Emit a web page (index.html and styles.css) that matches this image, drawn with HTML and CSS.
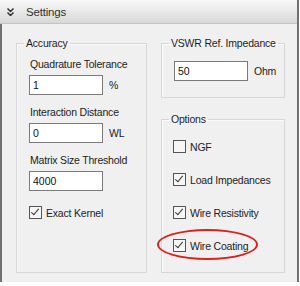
FILE: index.html
```html
<!DOCTYPE html>
<html lang="en">
<head>
    <meta charset="UTF-8">
    <title>Settings</title>
    <link rel="stylesheet" href="styles.css">
</head>
<body>
    <div class="panel">
        <div class="panel-head">
            <svg class="chevron" width="7" height="8" viewBox="0 0 7 8">
                <path d="M0.5 0.5 L3.5 3.5 L6.5 0.5 M0.5 4.5 L3.5 7.5 L6.5 4.5" fill="none" stroke="#333" stroke-width="1.5"/>
            </svg>
            <span>Settings</span>
        </div>
        <div class="panel-body">
            <fieldset class="group accuracy">
                <legend>Accuracy</legend>
                <div class="group-inner">
                    <div class="field">
                        <label>Quadrature Tolerance</label>
                        <div class="input-row"><input type="text" value="1"><span class="unit">%</span></div>
                    </div>
                    <div class="field">
                        <label>Interaction Distance</label>
                        <div class="input-row"><input type="text" value="0"><span class="unit">WL</span></div>
                    </div>
                    <div class="field">
                        <label>Matrix Size Threshold</label>
                        <div class="input-row"><input type="text" value="4000"></div>
                    </div>
                    <div class="check checked"><span class="box"></span>Exact Kernel</div>
                </div>
            </fieldset>
            <div class="right-col">
                <fieldset class="group vswr">
                    <legend>VSWR Ref. Impedance</legend>
                    <div class="group-inner">
                        <div class="input-row"><input type="text" value="50"><span class="unit">Ohm</span></div>
                    </div>
                </fieldset>
                <fieldset class="group options">
                    <legend>Options</legend>
                    <div class="group-inner">
                        <div class="check"><span class="box"></span>NGF</div>
                        <div class="check checked"><span class="box"></span>Load Impedances</div>
                        <div class="check checked"><span class="box"></span>Wire Resistivity</div>
                        <div class="check checked marked"><span class="box"></span>Wire Coating</div>
                    </div>
                </fieldset>
            </div>
        </div>
    </div>
</body>
</html>
```
FILE: styles.css
```css
body {
    margin: 0;
    background: #fff;
    font-family: "Liberation Sans", Arial, sans-serif;
    font-size: 10.5px;
    letter-spacing: -0.2px;
    color: #222;
}

.panel {
    width: 297px;
    height: 282px;
    border-right: 2px solid #707070;
    background: #f0f0f0;
    display: flex;
    flex-direction: column;
}

.panel-head {
    height: 23px;
    flex-shrink: 0;
    border-bottom: 1px solid #c4c4c4;
    background: linear-gradient(#f8f8f8, #d8d8d8);
    display: flex;
    align-items: center;
    gap: 12px;
    padding-left: 7px;
    font-size: 11.5px;
    color: #333;
}

.chevron {
    margin-top: 1px;
}

.panel-body {
    flex: 1;
    border-left: 2px solid #707070;
    display: flex;
    gap: 14px;
    padding: 13px 0 15px 14px;
}

.group {
    margin: 0;
    padding: 0;
    border: 1px solid #d7d7d7;
    box-shadow: inset 1px 1px 0 #fafafa;
    box-sizing: border-box;
    min-width: 0;
}

.group legend {
    margin-left: 7px;
    padding: 0 2px;
    white-space: nowrap;
    color: #1e1e1e;
}

.accuracy {
    width: 131px;
}

.accuracy .group-inner {
    padding: 9px 0 0 12px;
}

.right-col {
    width: 124px;
    display: flex;
    flex-direction: column;
    gap: 15px;
}

.vswr {
    height: 61px;
}

.vswr .group-inner {
    padding: 12px 0 0 12px;
}

.options {
    flex: 1;
}

.options .group-inner {
    padding: 15px 0 0 11px;
}

.field {
    display: flex;
    flex-direction: column;
    gap: 4px;
    margin-bottom: 11px;
}

.field label {
    padding-left: 1px;
    line-height: 13px;
}

.input-row {
    display: flex;
    align-items: center;
    gap: 6px;
}

.input-row input {
    width: 74px;
    height: 20px;
    box-sizing: border-box;
    border: 1px solid #7a7a7a;
    background: #fff;
    padding: 0 3px;
    font: inherit;
    color: #111;
}

.check {
    display: flex;
    align-items: center;
    gap: 4px;
    height: 13px;
    margin-bottom: 20px;
    position: relative;
}

.accuracy .check {
    margin-top: 15px;
}

.check .box {
    width: 13px;
    height: 13px;
    box-sizing: border-box;
    border: 1px solid #555;
    background: #f6f6f6;
    position: relative;
}

.check.checked .box::after {
    content: "";
    position: absolute;
    left: 3px;
    top: 0px;
    width: 3px;
    height: 7px;
    border: solid #333;
    border-width: 0 1px 1px 0;
    transform: rotate(40deg);
}

.check.marked::before {
    content: "";
    position: absolute;
    left: -16px;
    top: -10px;
    width: 101px;
    height: 31px;
    box-sizing: border-box;
    border: 2px solid #e0201c;
    border-radius: 50%;
}
```
